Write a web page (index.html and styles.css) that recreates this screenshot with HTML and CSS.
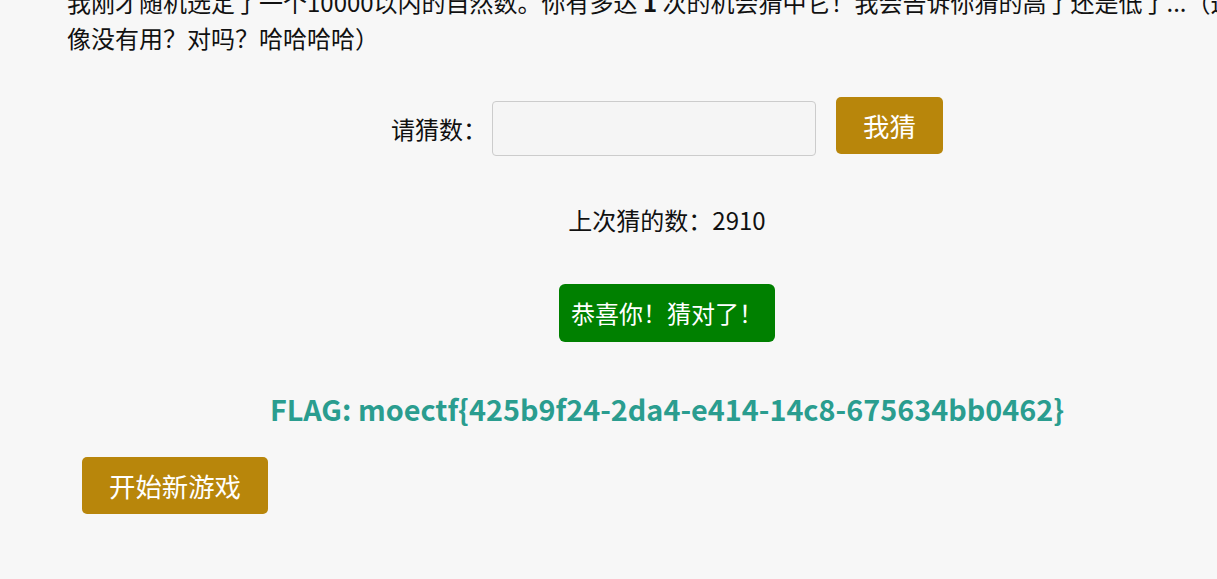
FILE: index.html
```html
<!DOCTYPE html>
<html lang="zh-CN">
<head>
  <meta charset="UTF-8">
  <meta name="viewport" content="width=device-width, initial-scale=1.0">
  <title>猜数字</title>
  <link rel="stylesheet" href="styles.css">
</head>
<body>
  <div class="game">
    <p class="intro">我刚才随机选定了一个10000以内的自然数。你有多达 <b>1</b> 次的机会猜中它！我会告诉你猜的高了还是低了...（这好像没有用？对吗？哈哈哈哈）</p>

    <form class="guess-form" onsubmit="return false;">
      <label class="guess-label" for="guess">请猜数：</label>
      <input class="guess-input" type="text" id="guess" name="guess">
      <button class="btn btn-guess" type="submit">我猜</button>
    </form>

    <p class="last-guess">上次猜的数：2910</p>

    <div class="result-row">
      <div class="result result-ok">恭喜你！猜对了！</div>
    </div>

    <p class="flag">FLAG: moectf{425b9f24-2da4-e414-14c8-675634bb0462}</p>

    <button class="btn btn-new" type="button">开始新游戏</button>
  </div>
</body>
</html>
```

FILE: styles.css
```css
* {
  margin: 0;
  padding: 0;
  box-sizing: border-box;
}

body {
  font-family: "Noto Sans CJK SC", "Noto Sans", sans-serif;
  font-size: 24px;
  color: #111;
  background: #f7f7f7;
  height: 100vh;
  overflow: hidden;
}

.game {
  width: 1200px;
  margin-left: 67px;
}

.intro {
  margin-top: -16px;
  line-height: 36px;
}

.guess-form {
  display: flex;
  justify-content: center;
  align-items: center;
  margin-top: 40px;
}

.guess-label {
  margin-top: 5px;
  margin-right: 5px;
}

.guess-input {
  width: 324px;
  height: 55px;
  margin-top: 5px;
  margin-right: 20px;
  border: 1px solid #ccc;
  border-radius: 4px;
  background: #f5f5f5;
  font-family: inherit;
  font-size: 24px;
  padding: 0 10px;
  outline: none;
}

.btn {
  border: none;
  border-radius: 5px;
  background: #b8860b;
  color: #fff;
  font-family: inherit;
  font-size: 26.4px;
  line-height: 39px;
  padding: 9px 27px;
  cursor: pointer;
}

.btn-guess {
  margin-bottom: 2px;
}

.last-guess {
  text-align: center;
  line-height: 36px;
  margin-top: 46px;
}

.result-row {
  display: flex;
  justify-content: center;
  margin-top: 46px;
}

.result {
  padding: 12px;
  line-height: 34px;
  border-radius: 6px;
  color: #fff;
}

.result-ok {
  background: #008000;
}

.flag {
  text-align: center;
  font-size: 28.8px;
  font-weight: bold;
  line-height: 43px;
  color: #2a9d8f;
  margin-top: 45px;
}

.btn-new {
  margin-top: 27px;
  margin-left: 15px;
}
```
